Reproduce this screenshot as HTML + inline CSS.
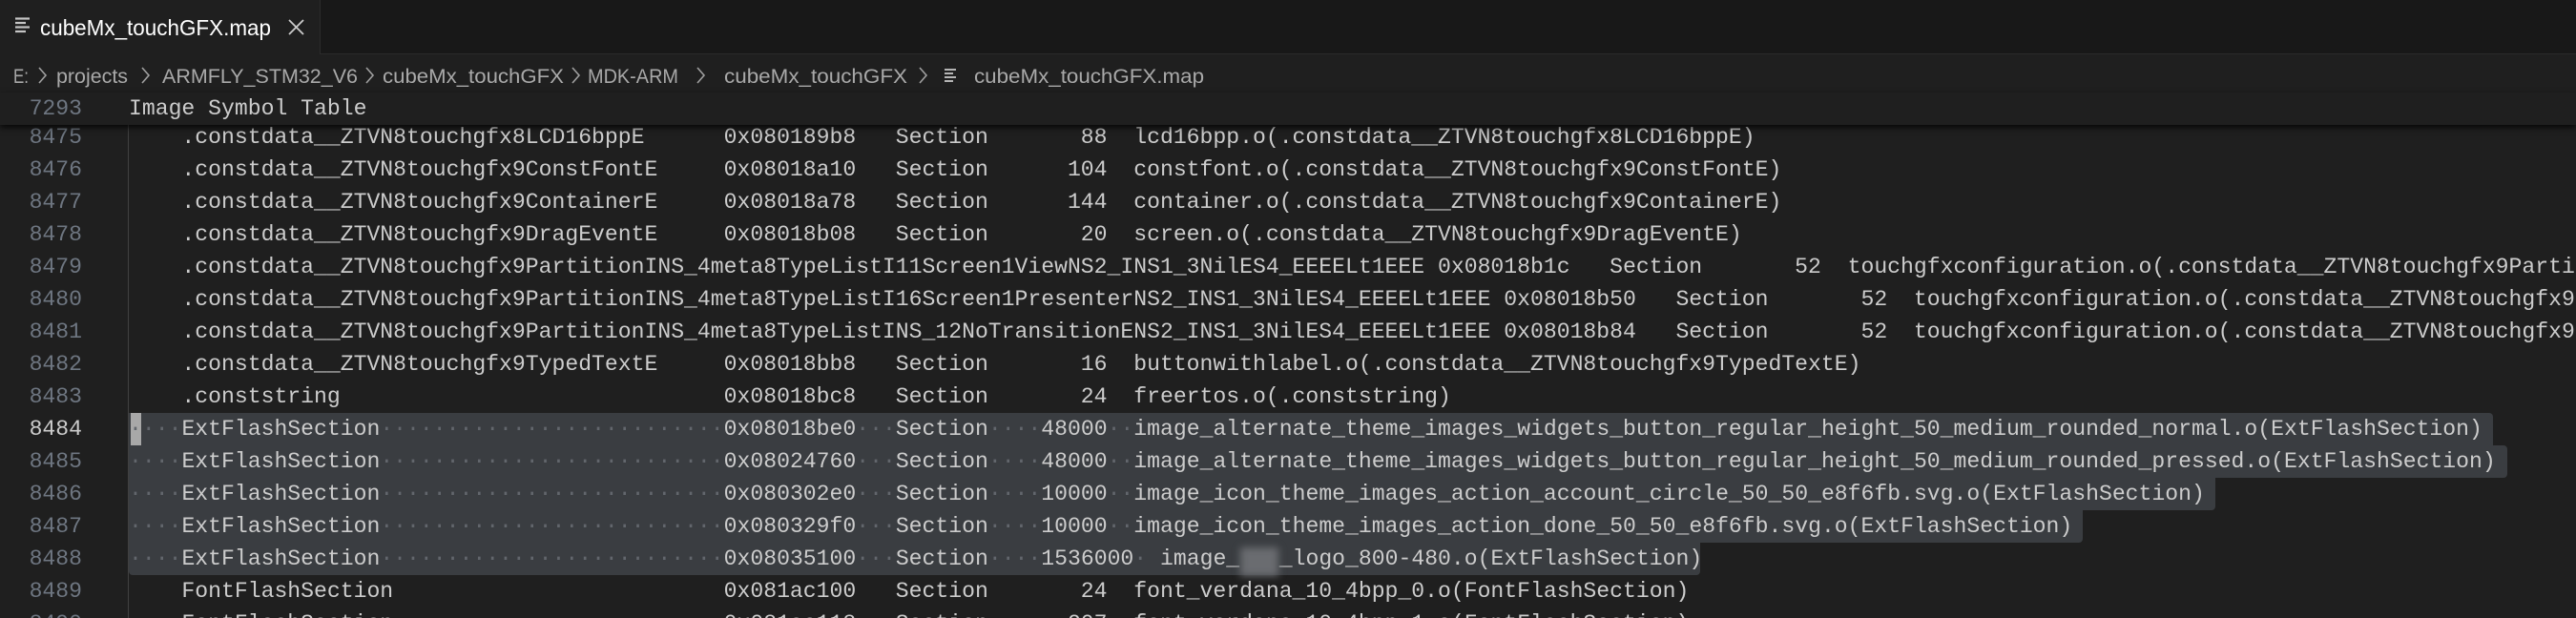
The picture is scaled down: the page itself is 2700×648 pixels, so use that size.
<!DOCTYPE html>
<html><head><meta charset="utf-8">
<style>
html,body{margin:0;padding:0;width:2700px;height:648px;overflow:hidden;background:#1f1f1f;}
#root{position:relative;width:2700px;height:648px;overflow:hidden;background:#1f1f1f;}
#tabbar{position:absolute;left:0;top:0;width:2700px;height:56px;background:#181818;border-bottom:1px solid #2b2b2b;}
#tab{position:absolute;left:0;top:0;width:335px;height:57px;background:#1f1f1f;}
#tabrest{position:absolute;left:335px;top:0;width:1px;height:56px;background:#2b2b2b;}
.code{position:absolute;left:135px;font-family:"Liberation Mono",monospace;font-size:23.1px;line-height:34px;height:34px;white-space:pre;color:#cccccc;}
.ln{position:absolute;left:0;width:86px;text-align:right;font-family:"Liberation Mono",monospace;font-size:23.1px;line-height:34px;color:#6e7681;}
.sel{position:absolute;left:135px;height:34px;background:#3a3d41;}
.d{color:#62666c;}
#sticky{position:absolute;left:0;top:97px;width:2700px;height:34px;background:#1f1f1f;box-shadow:0 3px 6px rgba(0,0,0,0.75);z-index:5;}
#guide{position:absolute;left:134px;top:97px;width:1px;height:551px;background:#404040;}
</style></head><body><div id="root">
<div id="tabbar"></div>
<div id="tab"></div>
<div id="tabrest"></div>
<svg width="2700" height="100" style="position:absolute;left:0;top:0" xmlns="http://www.w3.org/2000/svg">
  <g stroke="#c5c5c5" stroke-width="2.2">
    <line x1="16" y1="19.5" x2="31" y2="19.5"/>
    <line x1="16" y1="24" x2="27" y2="24"/>
    <line x1="16" y1="28.5" x2="31" y2="28.5"/>
    <line x1="16" y1="33" x2="27" y2="33"/>
  </g>
  <text x="42" y="37" font-family="Liberation Sans, sans-serif" font-size="23" fill="#ffffff" textLength="242" lengthAdjust="spacingAndGlyphs">cubeMx_touchGFX.map</text>
  <g stroke="#cccccc" stroke-width="1.8"><line x1="303" y1="21" x2="318" y2="36"/><line x1="318" y1="21" x2="303" y2="36"/></g>
  <g font-family="Liberation Sans, sans-serif" font-size="21" fill="#a9a9a9">
    <text x="14" y="87" textLength="16" lengthAdjust="spacingAndGlyphs">E:</text>
    <text x="59" y="87" textLength="75" lengthAdjust="spacingAndGlyphs">projects</text>
    <text x="170" y="87" textLength="205" lengthAdjust="spacingAndGlyphs">ARMFLY_STM32_V6</text>
    <text x="401" y="87" textLength="190" lengthAdjust="spacingAndGlyphs">cubeMx_touchGFX</text>
    <text x="616" y="87" textLength="95" lengthAdjust="spacingAndGlyphs">MDK-ARM</text>
    <text x="759" y="87" textLength="192" lengthAdjust="spacingAndGlyphs">cubeMx_touchGFX</text>
    <text x="1021" y="87" textLength="241" lengthAdjust="spacingAndGlyphs">cubeMx_touchGFX.map</text>
  </g>
  <g fill="none" stroke="#a0a0a0" stroke-width="1.6">
    <polyline points="41,71 48,79 41,87"/>
    <polyline points="149,71 156,79 149,87"/>
    <polyline points="384,71 391,79 384,87"/>
    <polyline points="600,71 607,79 600,87"/>
    <polyline points="731,71 738,79 731,87"/>
    <polyline points="964,71 971,79 964,87"/>
  </g>
  <g stroke="#b5b5b5" stroke-width="2">
    <line x1="990" y1="73" x2="1002" y2="73"/>
    <line x1="990" y1="77" x2="999" y2="77"/>
    <line x1="990" y1="81" x2="1002" y2="81"/>
    <line x1="990" y1="85" x2="999" y2="85"/>
  </g>
</svg>

<div id="guide"></div>

<div class="sel" style="top:433px;width:2478px;border-radius:0 4px 0 0"></div>
<div class="sel" style="top:467px;width:2493px;border-radius:0 4px 4px 0"></div>
<div class="sel" style="top:501px;width:2187px;border-radius:0 0 4px 0"></div>
<div class="sel" style="top:535px;width:2048px;border-radius:0 0 4px 0"></div>
<div class="sel" style="top:569px;width:1647px;border-radius:0 0 4px 4px"></div>
<div style="position:absolute;left:137px;top:433px;width:11px;height:34px;background:#a8a8a8"></div>

<div class="ln" style="top:127px">8475</div>
<div class="ln" style="top:161px">8476</div>
<div class="ln" style="top:195px">8477</div>
<div class="ln" style="top:229px">8478</div>
<div class="ln" style="top:263px">8479</div>
<div class="ln" style="top:297px">8480</div>
<div class="ln" style="top:331px">8481</div>
<div class="ln" style="top:365px">8482</div>
<div class="ln" style="top:399px">8483</div>
<div class="ln" style="top:433px;color:#cccccc">8484</div>
<div class="ln" style="top:467px">8485</div>
<div class="ln" style="top:501px">8486</div>
<div class="ln" style="top:535px">8487</div>
<div class="ln" style="top:569px">8488</div>
<div class="ln" style="top:603px">8489</div>
<div class="ln" style="top:637px">8490</div>

<div class="code" style="top:127px">    .constdata__ZTVN8touchgfx8LCD16bppE      0x080189b8   Section       88  lcd16bpp.o(.constdata__ZTVN8touchgfx8LCD16bppE)</div>
<div class="code" style="top:161px">    .constdata__ZTVN8touchgfx9ConstFontE     0x08018a10   Section      104  constfont.o(.constdata__ZTVN8touchgfx9ConstFontE)</div>
<div class="code" style="top:195px">    .constdata__ZTVN8touchgfx9ContainerE     0x08018a78   Section      144  container.o(.constdata__ZTVN8touchgfx9ContainerE)</div>
<div class="code" style="top:229px">    .constdata__ZTVN8touchgfx9DragEventE     0x08018b08   Section       20  screen.o(.constdata__ZTVN8touchgfx9DragEventE)</div>
<div class="code" style="top:263px">    .constdata__ZTVN8touchgfx9PartitionINS_4meta8TypeListI11Screen1ViewNS2_INS1_3NilES4_EEEELt1EEE 0x08018b1c   Section       52  touchgfxconfiguration.o(.constdata__ZTVN8touchgfx9Parti</div>
<div class="code" style="top:297px">    .constdata__ZTVN8touchgfx9PartitionINS_4meta8TypeListI16Screen1PresenterNS2_INS1_3NilES4_EEEELt1EEE 0x08018b50   Section       52  touchgfxconfiguration.o(.constdata__ZTVN8touchgfx9</div>
<div class="code" style="top:331px">    .constdata__ZTVN8touchgfx9PartitionINS_4meta8TypeListINS_12NoTransitionENS2_INS1_3NilES4_EEEELt1EEE 0x08018b84   Section       52  touchgfxconfiguration.o(.constdata__ZTVN8touchgfx9</div>
<div class="code" style="top:365px">    .constdata__ZTVN8touchgfx9TypedTextE     0x08018bb8   Section       16  buttonwithlabel.o(.constdata__ZTVN8touchgfx9TypedTextE)</div>
<div class="code" style="top:399px">    .conststring                             0x08018bc8   Section       24  freertos.o(.conststring)</div>
<div class="code" style="top:433px"><span class="d">····</span>ExtFlashSection<span class="d">··························</span>0x08018be0<span class="d">···</span>Section<span class="d">····</span>48000<span class="d">··</span>image_alternate_theme_images_widgets_button_regular_height_50_medium_rounded_normal.o(ExtFlashSection)</div>
<div class="code" style="top:467px"><span class="d">····</span>ExtFlashSection<span class="d">··························</span>0x08024760<span class="d">···</span>Section<span class="d">····</span>48000<span class="d">··</span>image_alternate_theme_images_widgets_button_regular_height_50_medium_rounded_pressed.o(ExtFlashSection)</div>
<div class="code" style="top:501px"><span class="d">····</span>ExtFlashSection<span class="d">··························</span>0x080302e0<span class="d">···</span>Section<span class="d">····</span>10000<span class="d">··</span>image_icon_theme_images_action_account_circle_50_50_e8f6fb.svg.o(ExtFlashSection)</div>
<div class="code" style="top:535px"><span class="d">····</span>ExtFlashSection<span class="d">··························</span>0x080329f0<span class="d">···</span>Section<span class="d">····</span>10000<span class="d">··</span>image_icon_theme_images_action_done_50_50_e8f6fb.svg.o(ExtFlashSection)</div>
<div class="code" style="top:569px"><span class="d">····</span>ExtFlashSection<span class="d">··························</span>0x08035100<span class="d">···</span>Section<span class="d">····</span>1536000<span class="d">·</span> image_<span style="color:transparent">abc</span>_logo_800-480.o(ExtFlashSection)</div>
<div style="position:absolute;left:1300px;top:574px;width:40px;height:30px;background:#6a6c70;filter:blur(4px)"></div>
<div class="code" style="top:603px">    FontFlashSection                         0x081ac100   Section       24  font_verdana_10_4bpp_0.o(FontFlashSection)</div>
<div class="code" style="top:637px">    FontFlashSection                         0x081ac118   Section      207  font_verdana_10_4bpp_1.o(FontFlashSection)</div>

<div id="sticky">
  <div class="ln" style="top:0">7293</div>
  <div class="code" style="top:0;color:#cccccc">Image Symbol Table</div>
</div>
</div></body></html>
